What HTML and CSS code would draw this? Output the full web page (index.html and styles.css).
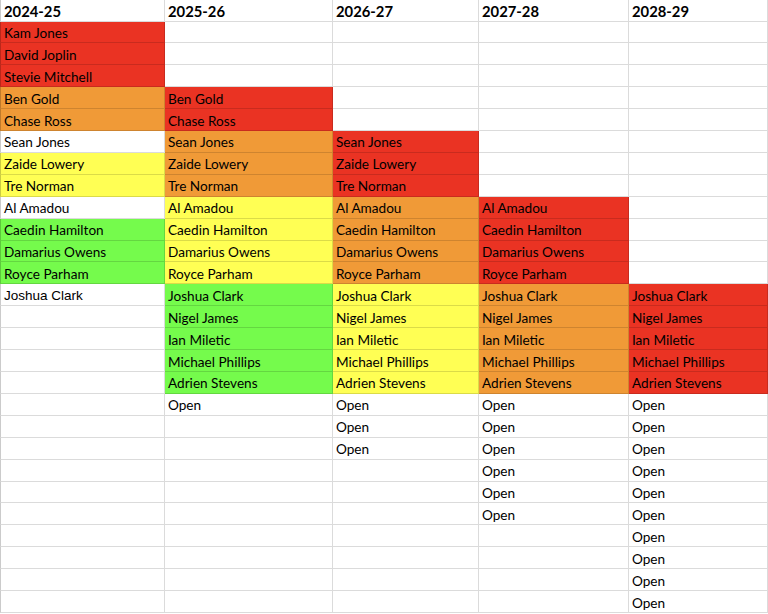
FILE: index.html
```html
<!DOCTYPE html>
<html>
<head>
<meta charset="utf-8">
<link rel="stylesheet" href="styles.css">
</head>
<body>
<div class="sheet">
  <!-- Column 1 -->
  <div class="cell first head">2024-25</div>
  <div class="cell first red">Kam Jones</div>
  <div class="cell first red">David Joplin</div>
  <div class="cell first red">Stevie Mitchell</div>
  <div class="cell first orange">Ben Gold</div>
  <div class="cell first orange">Chase Ross</div>
  <div class="cell first">Sean Jones</div>
  <div class="cell first yellow">Zaide Lowery</div>
  <div class="cell first yellow">Tre Norman</div>
  <div class="cell first">Al Amadou</div>
  <div class="cell first green">Caedin Hamilton</div>
  <div class="cell first green">Damarius Owens</div>
  <div class="cell first green">Royce Parham</div>
  <div class="cell first arial">Joshua Clark</div>
  <div class="cell first"></div><div class="cell first"></div><div class="cell first"></div><div class="cell first"></div><div class="cell first"></div>
  <div class="cell first"></div><div class="cell first"></div><div class="cell first"></div><div class="cell first"></div><div class="cell first"></div>
  <div class="cell first"></div><div class="cell first"></div><div class="cell first"></div><div class="cell first"></div>

  <!-- Column 2 -->
  <div class="cell head">2025-26</div>
  <div class="cell"></div><div class="cell"></div><div class="cell"></div>
  <div class="cell red">Ben Gold</div>
  <div class="cell red">Chase Ross</div>
  <div class="cell orange">Sean Jones</div>
  <div class="cell orange">Zaide Lowery</div>
  <div class="cell orange">Tre Norman</div>
  <div class="cell yellow">Al Amadou</div>
  <div class="cell yellow">Caedin Hamilton</div>
  <div class="cell yellow">Damarius Owens</div>
  <div class="cell yellow">Royce Parham</div>
  <div class="cell green">Joshua Clark</div>
  <div class="cell green">Nigel James</div>
  <div class="cell green">Ian Miletic</div>
  <div class="cell green">Michael Phillips</div>
  <div class="cell green">Adrien Stevens</div>
  <div class="cell">Open</div>
  <div class="cell"></div><div class="cell"></div><div class="cell"></div><div class="cell"></div><div class="cell"></div>
  <div class="cell"></div><div class="cell"></div><div class="cell"></div><div class="cell"></div>

  <!-- Column 3 -->
  <div class="cell head">2026-27</div>
  <div class="cell"></div><div class="cell"></div><div class="cell"></div><div class="cell"></div><div class="cell"></div>
  <div class="cell red">Sean Jones</div>
  <div class="cell red">Zaide Lowery</div>
  <div class="cell red">Tre Norman</div>
  <div class="cell orange">Al Amadou</div>
  <div class="cell orange">Caedin Hamilton</div>
  <div class="cell orange">Damarius Owens</div>
  <div class="cell orange">Royce Parham</div>
  <div class="cell yellow">Joshua Clark</div>
  <div class="cell yellow">Nigel James</div>
  <div class="cell yellow">Ian Miletic</div>
  <div class="cell yellow">Michael Phillips</div>
  <div class="cell yellow">Adrien Stevens</div>
  <div class="cell">Open</div>
  <div class="cell">Open</div>
  <div class="cell">Open</div>
  <div class="cell"></div><div class="cell"></div><div class="cell"></div><div class="cell"></div>
  <div class="cell"></div><div class="cell"></div><div class="cell"></div>

  <!-- Column 4 -->
  <div class="cell head">2027-28</div>
  <div class="cell"></div><div class="cell"></div><div class="cell"></div><div class="cell"></div>
  <div class="cell"></div><div class="cell"></div><div class="cell"></div><div class="cell"></div>
  <div class="cell red">Al Amadou</div>
  <div class="cell red">Caedin Hamilton</div>
  <div class="cell red">Damarius Owens</div>
  <div class="cell red">Royce Parham</div>
  <div class="cell orange">Joshua Clark</div>
  <div class="cell orange">Nigel James</div>
  <div class="cell orange">Ian Miletic</div>
  <div class="cell orange">Michael Phillips</div>
  <div class="cell orange">Adrien Stevens</div>
  <div class="cell">Open</div>
  <div class="cell">Open</div>
  <div class="cell">Open</div>
  <div class="cell">Open</div>
  <div class="cell">Open</div>
  <div class="cell">Open</div>
  <div class="cell"></div><div class="cell"></div><div class="cell"></div><div class="cell"></div>

  <!-- Column 5 -->
  <div class="cell head">2028-29</div>
  <div class="cell"></div><div class="cell"></div><div class="cell"></div><div class="cell"></div>
  <div class="cell"></div><div class="cell"></div><div class="cell"></div><div class="cell"></div>
  <div class="cell"></div><div class="cell"></div><div class="cell"></div><div class="cell"></div>
  <div class="cell red">Joshua Clark</div>
  <div class="cell red">Nigel James</div>
  <div class="cell red">Ian Miletic</div>
  <div class="cell red">Michael Phillips</div>
  <div class="cell red">Adrien Stevens</div>
  <div class="cell">Open</div>
  <div class="cell">Open</div>
  <div class="cell">Open</div>
  <div class="cell">Open</div>
  <div class="cell">Open</div>
  <div class="cell">Open</div>
  <div class="cell">Open</div>
  <div class="cell">Open</div>
  <div class="cell">Open</div>
  <div class="cell">Open</div>
</div>
</body>
</html>
```

FILE: styles.css
```css
html, body {
  margin: 0;
  padding: 0;
  background: #ffffff;
}

.sheet {
  display: grid;
  grid-template-columns: 165px 168px 146px 150px 139px;
  grid-template-rows: 21.5px repeat(27, 21.92px);
  grid-auto-flow: column;
  font-family: Lato, "Liberation Sans", sans-serif;
  font-size: 13.6px;
  color: #000;
}

.cell {
  box-sizing: border-box;
  display: flex;
  align-items: center;
  padding: 2px 0 0 3px;
  border-right: 1px solid rgba(0, 0, 0, 0.14);
  border-bottom: 1px solid rgba(0, 0, 0, 0.14);
  white-space: nowrap;
  overflow: hidden;
}

.first {
  border-left: 1px solid rgba(0, 0, 0, 0.2);
}

.head {
  font-weight: bold;
  font-size: 14.8px;
}

.arial {
  font-family: "Liberation Sans", Arial, sans-serif;
  font-size: 13.5px;
}

.red { background: #ea3323; }
.orange { background: #f09a37; }
.yellow { background: #ffff54; }
.green { background: #75fb4c; }
```
